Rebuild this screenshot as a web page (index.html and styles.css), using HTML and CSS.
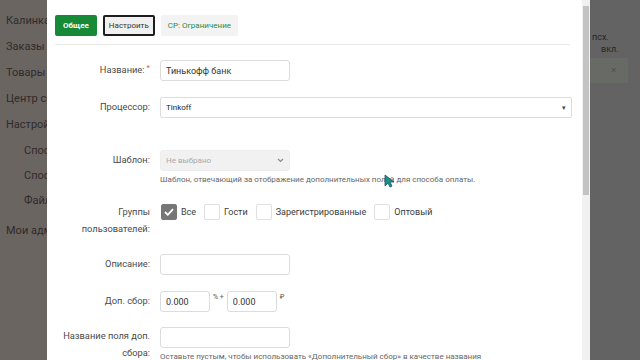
FILE: index.html
```html
<!DOCTYPE html>
<html lang="ru">
<head>
  <meta charset="UTF-8" />
  <title>Способ оплаты</title>
  <link rel="stylesheet" href="styles.css">
</head>
<body>

  <!-- Admin sidebar behind the dialog -->
  <aside class="side">
    <a class="side-item">Калинка.</a>
    <a class="side-item">Заказы</a>
    <a class="side-item">Товары</a>
    <a class="side-item">Центр со</a>
    <a class="side-item">Настройк</a>
    <a class="side-item sub">Спосо</a>
    <a class="side-item sub">Спосо</a>
    <a class="side-item sub">Файл</a>
    <a class="side-item last">Мои адм</a>
  </aside>

  <!-- Payment method dialog -->
  <div class="modal">
    <div class="modal-body">
      <div class="tabs">
        <button class="tab active">Общее</button>
        <button class="tab focus">Настроить</button>
        <button class="tab link">СР: Ограничение</button>
      </div>

      <div class="row r-name">
        <label class="lbl">Название:<sup class="req">*</sup></label>
        <div class="field"><input class="inp w130" type="text" value="Тинькофф банк" /></div>
      </div>

      <div class="row r-proc">
        <label class="lbl">Процессор:</label>
        <div class="field">
          <div class="select wide"><span>Tinkoff</span><span class="caret">▾</span></div>
        </div>
      </div>

      <div class="row r-tpl">
        <label class="lbl">Шаблон:</label>
        <div class="field">
          <div class="select w130 disabled"><span>Не выбрано</span>
            <svg class="chev" width="7" height="5" viewBox="0 0 7 5"><path d="M1 1l2.5 2.5L6 1" fill="none" stroke="#8a8a8a" stroke-width="1.2"/></svg>
          </div>
          <p class="help">Шаблон, отвечающий за отображение дополнительных полей для способа оплаты.</p>
        </div>
      </div>

      <div class="row r-groups">
        <label class="lbl two">Группы<br>пользователей:</label>
        <div class="field checks">
          <span class="chk on">
            <svg width="10" height="8" viewBox="0 0 10 8"><path d="M1 4l2.8 2.8L9 1.2" fill="none" stroke="#fff" stroke-width="1.8"/></svg>
          </span><span class="chk-text">Все</span>
          <span class="chk"></span><span class="chk-text">Гости</span>
          <span class="chk"></span><span class="chk-text">Зарегистрированные</span>
          <span class="chk"></span><span class="chk-text">Оптовый</span>
        </div>
      </div>

      <div class="row r-desc">
        <label class="lbl">Описание:</label>
        <div class="field"><input class="inp w130" type="text" /></div>
      </div>

      <div class="row r-fee">
        <label class="lbl">Доп. сбор:</label>
        <div class="field fee">
          <input class="inp w50" type="text" value="0.000" />
          <span class="unit">% +</span>
          <input class="inp w50" type="text" value="0.000" />
          <span class="unit">₽</span>
        </div>
      </div>

      <div class="row r-feename">
        <label class="lbl two">Название поля доп.<br>сбора:</label>
        <div class="field">
          <input class="inp w130" type="text" />
          <p class="help">Оставьте пустым, чтобы использовать «Дополнительный сбор» в качестве названия</p>
        </div>
      </div>

      <!-- mouse pointer captured in the shot -->
      <svg class="pointer" width="11" height="14" viewBox="0 0 11 14"><path d="M1 1v11l3-3 2 4 2-1-2-4h4z" fill="#1c8f8f" stroke="#0d5a5a" stroke-width=".8"/></svg>
    </div>
    <div class="scrollbar"><div class="thumb"></div></div>
  </div>

  <!-- Page content right of the dialog -->
  <div class="rest">
    <p class="rest-t1">псх.</p>
    <p class="rest-t2">вкл.</p>
    <div class="rest-box">×</div>
  </div>

</body>
</html>
```

FILE: styles.css
```css
html, body {
  margin: 0;
  padding: 0;
  height: 360px;
  overflow: hidden;
}
body {
  display: flex;
  font-family: Roboto, "Liberation Sans", sans-serif;
  color: #444;
}

/* sidebar (dimmed by overlay) */
.side {
  width: 47px;
  flex: none;
  background: #6b6562;
  overflow: hidden;
  white-space: nowrap;
  padding-top: 8px;
}
.side-item {
  display: block;
  font-size: 11px;
  line-height: 26px;
  padding-left: 6px;
  color: #2f2b2a;
}
.side-item.sub {
  padding-left: 24px;
  line-height: 25px;
}
.side-item.last {
  margin-top: 5px;
}

/* dialog */
.modal {
  width: 543px;
  flex: none;
  display: flex;
  background: #fff;
}
.modal-body {
  position: relative;
  flex: 1;
  padding: 15px 0 0 8px;
}
.scrollbar {
  width: 8px;
  background: #f1f1f1;
  padding: 6px 1px 0 1px;
  box-sizing: border-box;
}
.thumb {
  height: 189px;
  background: #c3c3c3;
}

.tabs {
  display: flex;
  gap: 6px;
  width: 515px;
  padding-bottom: 8px;
  border-bottom: 1px solid #e8e8e8;
}
.tab {
  height: 21px;
  padding: 0 6px;
  border: 1px solid transparent;
  border-radius: 2px;
  font-family: inherit;
  font-size: 8px;
  background: #f3f3f3;
  color: #2d8a45;
}
.tab.active {
  background: #178a37;
  color: #fff;
  font-weight: bold;
  padding: 0 7px;
}
.tab.focus {
  background: #f0f0f0;
  color: #333;
  border: 2px solid #1e1e1e;
  padding: 0 4px;
}

/* form rows */
.row {
  display: grid;
  grid-template-columns: 95px 1fr;
  column-gap: 10px;
}
.lbl {
  text-align: right;
  font-size: 9.3px;
  line-height: 20px;
  color: #4a4a4a;
}
.lbl.two {
  line-height: 17px;
}
.req {
  color: #d9534f;
  font-size: 8px;
  margin-left: 2px;
  vertical-align: 3px;
  line-height: 0;
}
.r-name { margin-top: 15px; }
.r-proc { margin-top: 16px; }
.r-tpl { margin-top: 32px; }
.r-groups { margin-top: 17px; }
.r-desc { margin-top: 17px; }
.r-fee { margin-top: 16px; }
.r-feename { margin-top: 15px; }

.inp {
  display: block;
  box-sizing: border-box;
  height: 21px;
  border: 1px solid #dcdcdc;
  border-radius: 3px;
  padding: 0 5px;
  font-family: inherit;
  font-size: 9px;
  color: #333;
  background: #fff;
}
.w130 { width: 130px; }
.w50 { width: 50px; }

.select {
  box-sizing: border-box;
  height: 21px;
  border: 1px solid #dcdcdc;
  border-radius: 2px;
  padding: 0 5px;
  display: flex;
  align-items: center;
  justify-content: space-between;
  font-size: 8px;
  color: #222;
}
.select.wide { width: 412px; }
.caret {
  font-size: 7px;
  color: #444;
}
.select.disabled {
  background: #f1f1f1;
  border-color: #ededed;
  color: #a9a9a9;
  border-radius: 3px;
}

.help {
  margin: 3px 0 0;
  font-size: 8px;
  line-height: 12px;
  color: #666;
  white-space: nowrap;
}

.checks {
  display: flex;
  align-items: center;
  height: 17px;
}
.chk {
  width: 16px;
  height: 16px;
  box-sizing: border-box;
  border: 1px solid #e0e0e0;
  border-radius: 2px;
  display: flex;
  align-items: center;
  justify-content: center;
  margin-left: 1px;
}
.chk.on {
  background: #767676;
  border-color: #767676;
}
.chk-text {
  font-size: 9px;
  color: #3c3c3c;
  margin: 0 7px 0 4px;
}

.fee {
  display: flex;
  align-items: flex-start;
}
.unit {
  font-size: 7px;
  color: #555;
  margin: 2px 3px 0 3px;
}

.pointer {
  position: absolute;
  left: 337px;
  top: 174px;
}

/* page right of the dialog (dimmed) */
.rest {
  flex: 1;
  background: #636363;
  overflow: hidden;
  white-space: nowrap;
  color: #262626;
  font-size: 9px;
}
.rest-t1 {
  margin: 32px 0 0 2px;
}
.rest-t2 {
  margin: 2px 0 0 11px;
}
.rest-box {
  margin: 4px 0 0 0;
  width: 38px;
  height: 25px;
  background: #686a66;
  color: #4e4e4e;
  text-align: right;
  line-height: 25px;
  padding-right: 12px;
  box-sizing: border-box;
}
```
